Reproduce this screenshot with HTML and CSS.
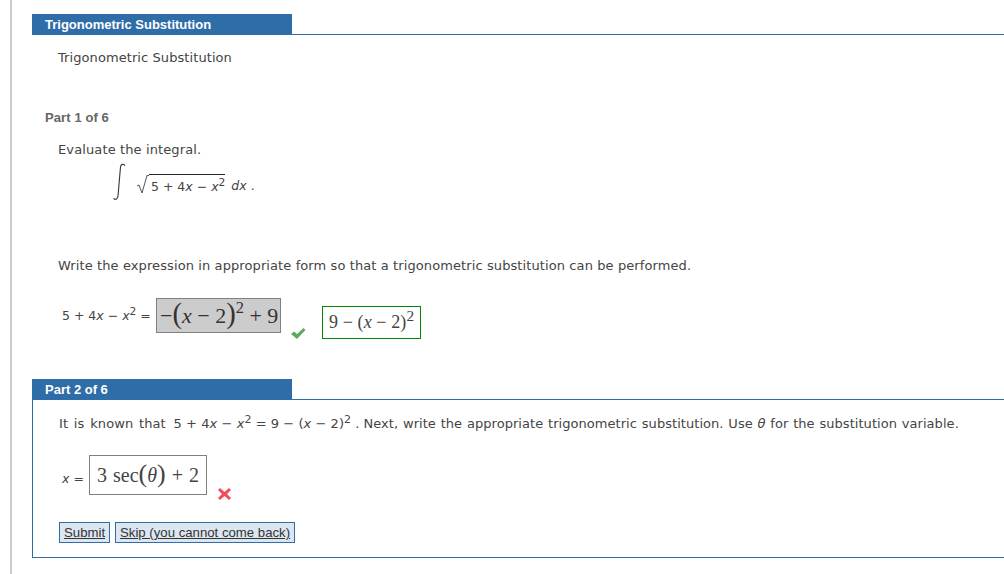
FILE: index.html
```html
<!DOCTYPE html>
<html>
<head>
<meta charset="utf-8">
<title>Trigonometric Substitution</title>
<link rel="stylesheet" href="styles.css">
</head>
<body>
<div class="page">
  <div class="heading"><span class="tab">Trigonometric Substitution</span></div>
  <p class="intro">Trigonometric Substitution</p>
  <h3 class="part-label">Part 1 of 6</h3>
  <p class="evaluate">Evaluate the integral.</p>
  <div class="integral">
    <svg class="int-sign" width="14" height="38" viewBox="0 0 14 38"><path d="M13 2.500C11 .5 9 1 8.500 4L6 33c-.4 3.500-2.500 4-4.500 2.500" fill="none" stroke="#333" stroke-width="1.100"/></svg>
    <span class="radical"><svg class="root" width="12" height="20" viewBox="0 0 12 20"><path d="M0 11l2-1 3 8L10 .5h2" fill="none" stroke="#555" stroke-width="1"/></svg><span class="radicand">5 + 4<i>x</i> − <i>x</i><sup>2</sup></span></span>
    <span class="dx"><i>dx</i> .</span>
  </div>
  <p class="write">Write the expression in appropriate form so that a trigonometric substitution can be performed.</p>
  <div class="answer-row">
    <span class="expr">5 + 4<i>x</i> − <i>x</i><sup>2</sup> =</span>
    <span class="given">−<span class="paren">(</span><i>x</i> − 2<span class="paren">)</span><sup>2</sup> + 9</span>
    <svg class="check" width="16" height="13" viewBox="0 0 16 13"><path d="M1 7l3-2.500 3 2.500 6.500-6 2 2L7 12z" fill="#5cab5c"/></svg>
    <span class="correct">9 − (<i>x</i> − 2)<sup>2</sup></span>
  </div>
  <div class="heading"><span class="tab">Part 2 of 6</span></div>
  <div class="panel">
    <p class="known"><span class="lead">It is known that</span> <span class="inline-math">5 + 4<i>x</i> − <i>x</i><sup>2</sup> = 9 − (<i>x</i> − 2)<sup>2</sup> .</span><span class="rest">Next, write the appropriate trigonometric substitution. Use <i>θ</i> for the substitution variable.</span></p>
    <div class="x-row">
      <span class="expr"><i>x</i> =</span>
      <span class="input">3 sec<span class="paren">(</span><i>θ</i><span class="paren">)</span> + 2</span>
      <svg class="cross" width="15" height="14" viewBox="0 0 15 14"><path d="M1 3l2-2 4.500 4 4.500-4 2 2-4 4 4 4-2 2-4.500-4-4.500 4-2-2 4-4z" fill="#ee4e5e"/></svg>
    </div>
    <div class="buttons">
      <a class="btn">Submit</a>
      <a class="btn">Skip (you cannot come back)</a>
    </div>
  </div>
</div>
</body>
</html>
```
FILE: styles.css
```css
html, body { margin: 0; padding: 0; background: #fff; overflow: hidden; }
body { width: 1004px; height: 574px; color: #444; font-family: "DejaVu Sans", Verdana, sans-serif; font-size: 13px; }
p, h3 { margin: 0; }
.page { box-sizing: border-box; height: 574px; margin-left: 10px; border-left: 2px solid #ccc; padding: 14px 0 0 20px; }
.heading { border-bottom: 1px solid #2e6da8; height: 20px; }
.tab { display: block; box-sizing: border-box; width: 260px; height: 21px; padding-left: 13px; background: #2e6da8; color: #fff; font: bold 13px/21px "Liberation Sans", Arial, sans-serif; }
.intro { margin: 14px 0 0 26px; line-height: 18px; letter-spacing: .08px; }
.part-label { margin: 42px 0 0 13px; font: bold 13px/18px "Liberation Sans", Arial, sans-serif; color: #666; letter-spacing: .1px; }
.evaluate { margin: 14px 0 0 26px; line-height: 18px; letter-spacing: .12px; }
.integral { display: flex; align-items: center; height: 42px; margin: 2px 0 0 80px; font-size: 12.500px; }
.int-sign { flex: none; margin-right: 11px; }
.radical { display: flex; align-items: flex-end; margin-top: 4px; }
.root { flex: none; margin-bottom: -1px; }
.radicand { border-top: 1px solid #222; padding: 4px 0 0 2px; line-height: 15px; white-space: nowrap; }
sup { font-size: 85%; line-height: 0; }
.dx { margin: 7px 0 0 6px; }
.write { margin: 54px 0 0 26px; line-height: 18px; letter-spacing: .1px; }
.answer-row { display: flex; align-items: flex-start; height: 81px; margin: 23px 0 0 30px; }
.answer-row .expr, .x-row .expr { font-size: 12.500px; white-space: nowrap; }
.answer-row .expr { margin-top: 10px; width: 94px; flex: none; }
.given { box-sizing: border-box; flex: none; width: 125px; height: 35px; background: #ccc; border: 1px solid #808080; font: 22px/33px "Liberation Serif", serif; color: #333; white-space: nowrap; padding-left: 3px; }
.paren { font-size: 130%; line-height: 0; font-weight: 400; }
.given sup { font-size: 75%; position: relative; top: -2px; }
.check { flex: none; margin: 29px 0 0 9px; }
.correct { box-sizing: border-box; flex: none; width: 99px; height: 33px; margin: 8px 0 0 16px; border: 1px solid #080; font: 18px/31px "Liberation Serif", serif; color: #444; padding-left: 6px; white-space: nowrap; letter-spacing: .1px; }
.panel { box-sizing: border-box; height: 158px; border-left: 1px solid #2e6da8; border-bottom: 1px solid #2e6da8; padding: 15px 0 0 26px; }
.known { line-height: 18px; white-space: nowrap; letter-spacing: .05px; word-spacing: .6px; }
.lead { word-spacing: 1.500px; letter-spacing: .1px; }
.inline-math { font-size: 13px; margin-left: 3px; word-spacing: 0; }
.rest { margin-left: 4px; }
.x-row { display: flex; align-items: flex-start; height: 67px; margin-top: 22px; padding-left: 3px; }
.x-row .expr { margin-top: 16px; width: 27px; flex: none; }
.input { box-sizing: border-box; flex: none; width: 118px; height: 40px; border: 1px solid #808080; font: 20px/38px "Liberation Serif", serif; color: #444; padding-left: 7px; white-space: nowrap; word-spacing: 1px; }
.cross { flex: none; margin: 32px 0 0 10px; }
.buttons { display: flex; gap: 5px; }
.btn { box-sizing: border-box; height: 21px; padding: 0 4px; background: #dce6f1; border: 1px solid #2e6da8; color: #333; font: 13.200px/19px "Liberation Sans", Arial, sans-serif; text-decoration: underline; white-space: nowrap; }
```
